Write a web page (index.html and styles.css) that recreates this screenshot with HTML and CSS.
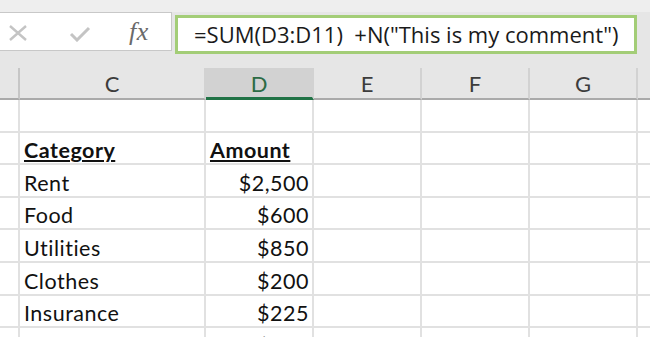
FILE: index.html
```html
<!DOCTYPE html>
<html>
<head>
<meta charset="utf-8">
<link rel="stylesheet" href="styles.css">
</head>
<body>
<div class="app">
  <div class="topstrip"></div>
  <div class="fbar">
    <div class="tools">
      <svg class="ic-x" width="22" height="18" viewBox="0 0 22 18"><path d="M3 2 L19 16 M19 2 L3 16" stroke="#c4c4c4" stroke-width="2.4" fill="none"/></svg>
      <svg class="ic-ok" width="22" height="16" viewBox="0 0 22 16"><path d="M2 8 L8 14 L20 2" stroke="#c4c4c4" stroke-width="3" fill="none"/></svg>
      <span class="fx">fx</span>
    </div>
    <div class="formula">=SUM(D3:D11)&nbsp; +N("This is my comment")</div>
  </div>
  <div class="gap"></div>
  <div class="sheet">
    <div class="hd first"></div>
    <div class="hd">C</div>
    <div class="hd sel">D</div>
    <div class="hd">E</div>
    <div class="hd">F</div>
    <div class="hd">G</div>
    <div class="hd last"></div>

    <div class="c"></div><div class="c"></div><div class="c"></div><div class="c"></div><div class="c"></div><div class="c"></div><div class="c last"></div>

    <div class="c"></div><div class="c"><span class="th">Category</span></div><div class="c"><span class="th">Amount</span></div><div class="c"></div><div class="c"></div><div class="c"></div><div class="c last"></div>

    <div class="c"></div><div class="c">Rent</div><div class="c num">$2,500</div><div class="c"></div><div class="c"></div><div class="c"></div><div class="c last"></div>

    <div class="c"></div><div class="c">Food</div><div class="c num">$600</div><div class="c"></div><div class="c"></div><div class="c"></div><div class="c last"></div>

    <div class="c"></div><div class="c">Utilities</div><div class="c num">$850</div><div class="c"></div><div class="c"></div><div class="c"></div><div class="c last"></div>

    <div class="c"></div><div class="c">Clothes</div><div class="c num">$200</div><div class="c"></div><div class="c"></div><div class="c"></div><div class="c last"></div>

    <div class="c"></div><div class="c">Insurance</div><div class="c num">$225</div><div class="c"></div><div class="c"></div><div class="c"></div><div class="c last"></div>

    <div class="c"></div><div class="c"></div><div class="c num">$100</div><div class="c"></div><div class="c"></div><div class="c"></div><div class="c last"></div>
  </div>
</div>
</body>
</html>
```
FILE: styles.css
```css
html, body {
  margin: 0;
  padding: 0;
  background: #ffffff;
}
.app {
  width: 650px;
  height: 337px;
  overflow: hidden;
  background: #e6e6e6;
  font-family: "Lato", "Open Sans", sans-serif;
}
.topstrip {
  height: 12px;
  background: #eeeeee;
}
.fbar {
  display: flex;
  align-items: flex-start;
  height: 44px;
}
.tools {
  box-sizing: border-box;
  width: 172px;
  height: 39px;
  background: #ffffff;
  border-top: 1px solid #c8c8c8;
  border-bottom: 1px solid #c8c8c8;
  border-right: 1px solid #c8c8c8;
  display: flex;
  align-items: center;
}
.ic-x { margin-left: 7px; margin-top: 2px; }
.ic-ok { margin-left: 40px; margin-top: 4px; }
.fx {
  margin-left: 38px;
  font-family: "Liberation Serif", serif;
  font-style: italic;
  font-size: 26px;
  color: #6a6a6a;
  letter-spacing: 0.5px;
  margin-top: 1px;
}
.formula {
  box-sizing: border-box;
  margin-left: 3px;
  margin-top: 3px;
  width: 462px;
  height: 39px;
  background: #ffffff;
  border: 3px solid #a3cd77;
  font-family: "Open Sans", sans-serif;
  font-size: 22px;
  color: #1a1a1a;
  padding-left: 16px;
  line-height: 32px;
  white-space: nowrap;
}
.gap { height: 12px; }
.sheet {
  display: grid;
  grid-template-columns: 20px 186px 108px 108px 108px 108px 12px;
  grid-template-rows: 32px repeat(8, 32.6px);
}
.hd {
  box-sizing: border-box;
  border-right: 2px solid #d2d2d2;
  border-bottom: 2px solid #aaaaaa;
  text-align: center;
  font-size: 22px;
  line-height: 32px;
  color: #3c3c3c;
}
.hd.first { border-right-color: #c6c6c6; }
.hd.sel {
  background: #d2d2d2;
  border-bottom: 3px solid #217346;
  color: #2c6b45;
  line-height: 31px;
}
.hd.last { border-right: none; }
.c {
  box-sizing: border-box;
  background: #ffffff;
  border-right: 2px solid #e1e1e1;
  border-bottom: 2px solid #e1e1e1;
  font-size: 21.5px;
  letter-spacing: 0.5px;
  color: #111111;
  padding: 0 4px 0 4px;
  display: flex;
  align-items: flex-end;
  line-height: 26px;
  white-space: nowrap;
}
.c.last { border-right: none; }
.c.num { justify-content: flex-end; padding-right: 3px; }
.th {
  font-weight: bold;
  text-decoration: underline;
  text-underline-offset: 2px;
}
```
